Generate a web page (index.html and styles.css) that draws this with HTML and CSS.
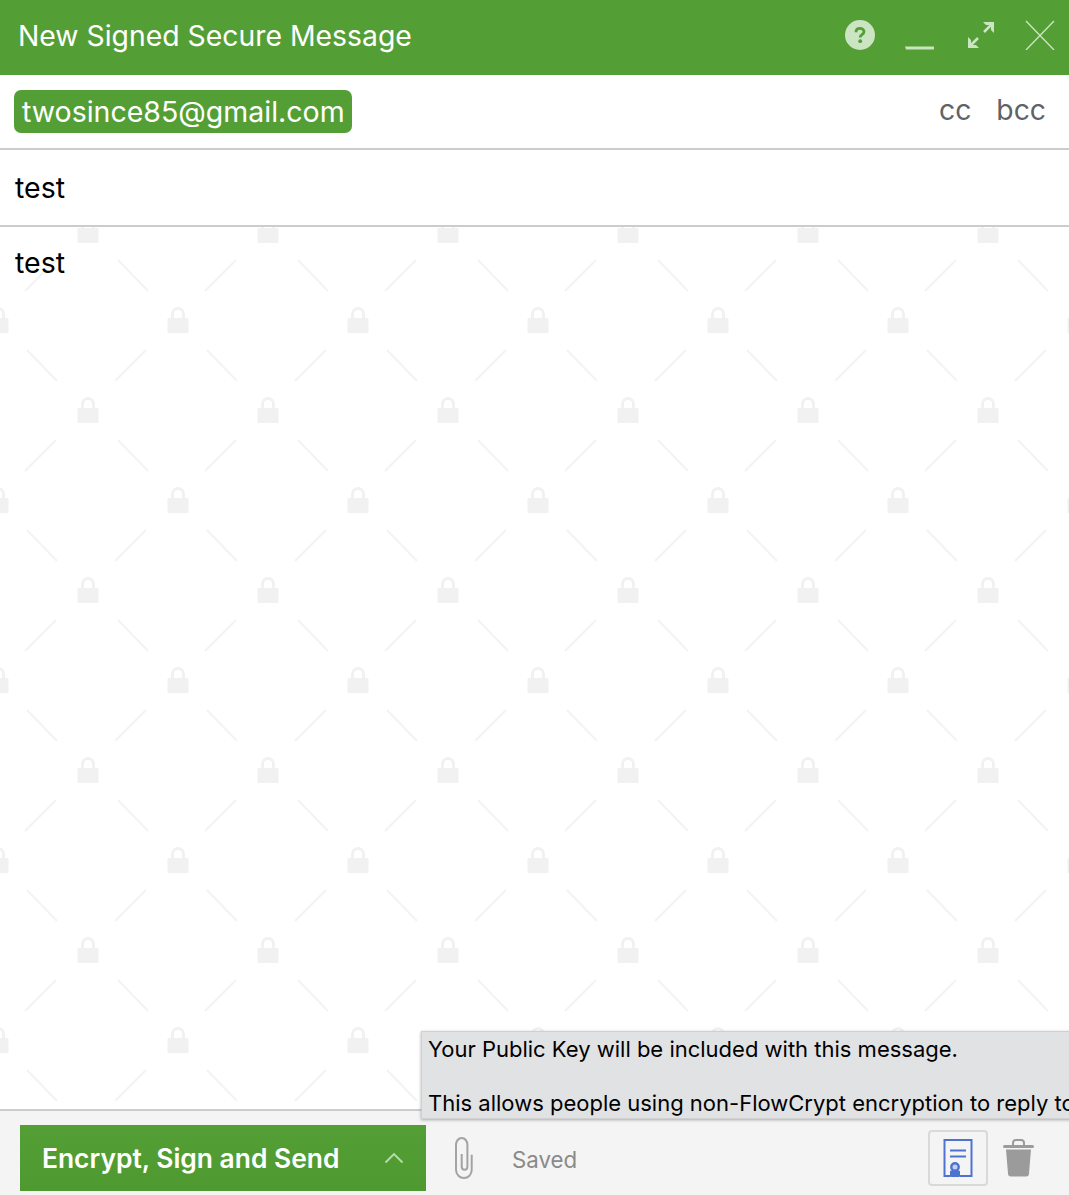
FILE: index.html
```html
<!DOCTYPE html>
<html lang="en">
<head>
<meta charset="utf-8">
<title>New Signed Secure Message</title>
<link rel="stylesheet" href="styles.css">
</head>
<body>
<div class="composer">
  <header class="titlebar">
    <h1 class="title">New Signed Secure Message</h1>
    <div class="window-actions">
      <svg class="help" width="30" height="30" viewBox="0 0 30 30"><circle cx="15" cy="15" r="15" fill="#cbe4c1"/><path d="M11 12.200c0-2.500 1.800-3.800 4-3.800s4 1.300 4 3.400c0 2.900-3.800 2.900-3.800 5.600" fill="none" stroke="#549f35" stroke-width="2.800"/><circle cx="15.200" cy="21.200" r="1.900" fill="#549f35"/></svg>
      <svg class="min" width="30" height="30" viewBox="0 0 30 30"><path d="M0 26.500h29l-.1 3H1z" fill="#cbe4c1"/></svg>
      <svg class="expand" width="28" height="28" viewBox="0 0 28 28"><path d="M2 26l9-9M17 11l9-9" stroke="#cbe4c1" stroke-width="2.600" fill="none"/><path d="M1 16v11h11l-3-3H4v-5zM16 1h11v11l-3-3V4h-5z" fill="#cbe4c1"/></svg>
      <svg class="close" width="30" height="30" viewBox="0 0 30 30"><path d="M1 1l28 29M29 1L1 30" stroke="#cfe6c6" stroke-width="1.300" fill="none"/></svg>
    </div>
  </header>
  <section class="recipients">
    <span class="chip">twosince85@gmail.com</span>
    <span class="copy-links"><span>cc</span><span>bcc</span></span>
  </section>
  <section class="subject">test</section>
  <main class="message">test</main>
  <footer class="toolbar">
    <button class="send" type="button">
      <span>Encrypt, Sign and Send</span>
      <svg width="20" height="12" viewBox="0 0 20 12"><path d="M1.500 10.500L10 2l8.500 8.500" fill="none" stroke="#b9dcae" stroke-width="1.800"/></svg>
    </button>
    <svg class="clip" width="22" height="42" viewBox="0 0 22 42"><path d="M18.700 17.700V32.700c0 5-3.500 8.300-7.700 8.300s-8-3.300-8-8.300V8c0-4 2.500-7 5.700-7s5.700 3 5.700 7v21.500c0 2-1.200 3.200-2.800 3.200s-2.900-1.200-2.900-3.200V17" fill="none" stroke="#a3a3a3" stroke-width="2"/></svg>
    <span class="saved">Saved</span>
    <div class="toolbar-right">
      <span class="pubkey">
        <svg width="30" height="40" viewBox="0 0 30 40"><path d="M7 38H1.500V2h27v36H17" fill="none" stroke="#4e72cf" stroke-width="2"/><path d="M7 12.500h16M7 18.500h16" stroke="#4e72cf" stroke-width="2.200"/><circle cx="12" cy="29" r="3.700" fill="#c3d0ef" stroke="#4e72cf" stroke-width="2.400"/><rect x="7" y="32.500" width="10" height="6.500" rx="1" fill="#4e72cf"/></svg>
      </span>
      <svg class="trash" width="31" height="38" viewBox="0 0 31 38"><path d="M1.500 7.500h28" stroke="#9b9b9b" stroke-width="3" stroke-linecap="round"/><path d="M10 6V4a3 3 0 0 1 3-3h5a3 3 0 0 1 3 3v2" fill="none" stroke="#9b9b9b" stroke-width="2"/><path d="M3 10.500h25l-2 24a3 3 0 0 1-3 3H8a3 3 0 0 1-3-3z" fill="#9b9b9b"/></svg>
    </div>
    <div class="tooltip">Your Public Key will be included with this message.<br><br>This allows people using non-FlowCrypt encryption to reply to you.</div>
  </footer>
</div>
</body>
</html>
```

FILE: styles.css
```css
* { box-sizing: border-box; }
html, body { margin: 0; height: 100%; overflow: hidden; }
body { font-family: Inter, "Liberation Sans", sans-serif; background: #fff; color: #000; }
.composer { display: flex; flex-direction: column; width: 1069px; height: 1195px; }
.titlebar { display: flex; align-items: center; justify-content: space-between; height: 75px; flex: none; padding: 0 14px 0 18px; background: #549f35; }
.title { margin: 0 0 3px; font-family: Inter, sans-serif; font-size: 28.35px; font-weight: 400; color: #fff; }
.window-actions { display: flex; align-items: center; gap: 30px; margin-bottom: 5px; }
.window-actions svg { display: block; }
.window-actions .expand { margin-left: 2px; }
.recipients { display: flex; align-items: center; justify-content: space-between; height: 75px; flex: none; padding: 0 23px 0 14px; border-bottom: 2px solid #ccc; }
.chip { display: inline-block; height: 43px; padding: 0 7px 0 8px; line-height: 43px; border-radius: 7px; background: #549f35; color: #fff; font-size: 28.5px; }
.copy-links { display: flex; gap: 25px; margin-bottom: 3px; font-size: 28.3px; color: #5f6368; }
.subject { height: 77px; flex: none; padding: 0 15px; line-height: 76px; font-size: 28.5px; border-bottom: 2px solid #ccc; }
.message { flex: 1; padding: 18px 15px 0; font-size: 28.5px; line-height: 36px; background-image: url("data:image/svg+xml,%3Csvg xmlns='http://www.w3.org/2000/svg' width='180' height='180'%3E%3Cg fill='%23f1f1f1'%3E%3Crect x='77.500' y='1' width='21' height='15' rx='1'/%3E%3Crect x='77.500' y='181' width='21' height='15'/%3E%3Crect x='167.500' y='91' width='21' height='15' rx='1'/%3E%3Crect x='-12.500' y='91' width='21' height='15' rx='1'/%3E%3C/g%3E%3Cg stroke='%23f1f1f1' stroke-width='3' fill='none'%3E%3Cpath d='M82.500 2v-5a5.500 5.500 0 0 1 11 0v5M82.500 182v-5a5.500 5.500 0 0 1 11 0v5M172.500 92v-5a5.500 5.500 0 0 1 11 0v5M-7.500 92v-5a5.500 5.500 0 0 1 11 0v5'/%3E%3C/g%3E%3Cg stroke='%23f3f3f3' stroke-width='2' fill='none'%3E%3Cpath d='M118 33l30 31M205 64l31-31M25 64l31-31M27 123l30 31M207 123l30 31M115 154l31-31'/%3E%3C/g%3E%3C/svg%3E"); background-position: 0 0; }
.toolbar { position: relative; display: flex; align-items: center; height: 86px; flex: none; padding: 14px 35px 4px 20px; border-top: 2px solid #ccc; background: #f4f4f4; }
.send { display: flex; align-items: center; justify-content: space-between; width: 406px; height: 66px; padding: 0 22px; border: 0; background: linear-gradient(#549f35, #4f9a30); color: #fff; font-family: Inter, sans-serif; font-size: 26.4px; font-weight: 600; }
.clip { margin-left: 27px; }
.saved { margin-left: 37px; padding-top: 2px; font-size: 22.3px; color: #8a8a8a; }
.toolbar-right { display: flex; align-items: center; gap: 15px; margin-left: auto; }
.pubkey { display: flex; align-items: center; justify-content: center; width: 60px; height: 56px; border: 2px solid #d9d9d9; border-radius: 4px; }
.trash { display: block; }
.tooltip { position: absolute; left: 421px; top: -80px; width: 760px; height: 88px; padding: 4px 6px; border: 1px solid #d0d0d0; background: #e1e2e4; box-shadow: 0 1px 3px rgba(0,0,0,.3); font-size: 22px; line-height: 27px; white-space: nowrap; }
```
